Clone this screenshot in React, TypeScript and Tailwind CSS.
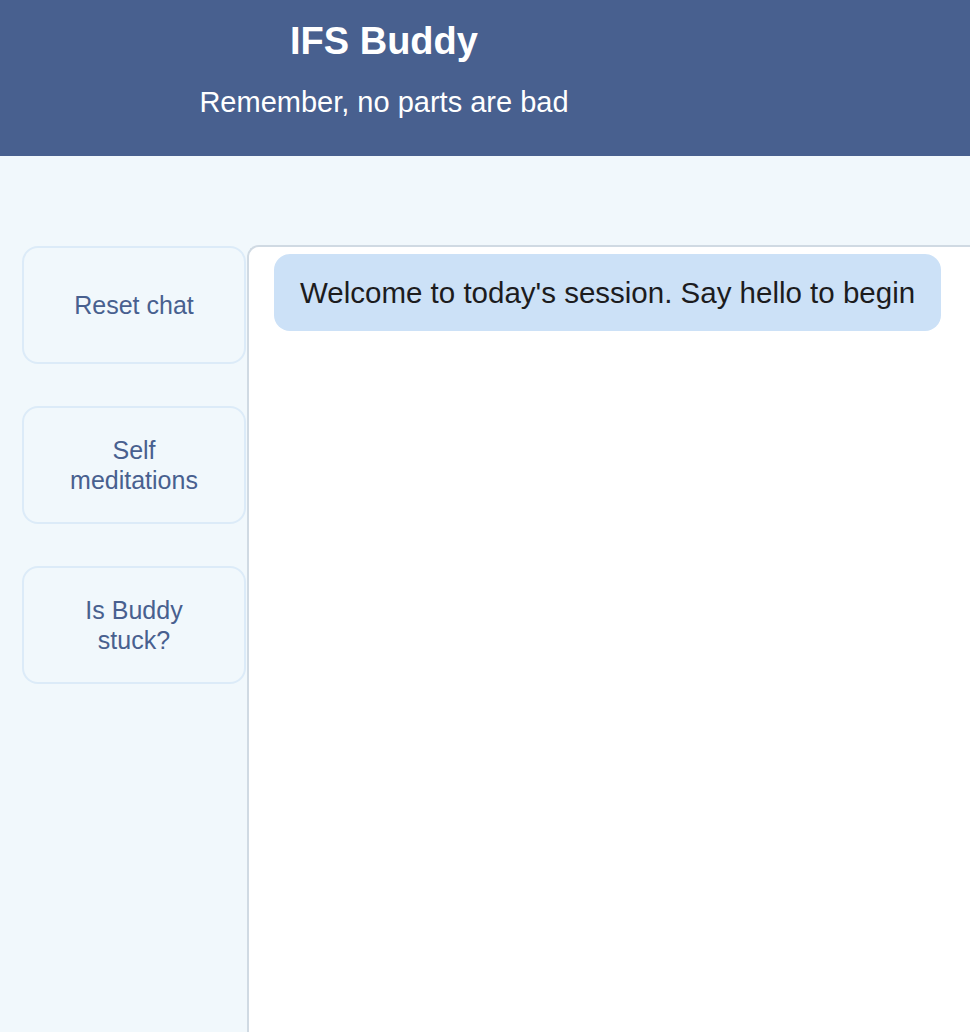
import React from "react";

const buttons = ["Reset chat", "Self meditations", "Is Buddy stuck?"];

export default function App() {
  return (
    <div
      className="flex h-screen flex-col overflow-hidden bg-[#f1f8fc]"
      style={{ fontFamily: '"Liberation Sans", Arial, sans-serif' }}
    >
      {/* Header */}
      <header className="h-[156px] shrink-0 bg-[#48608f]">
        <div className="flex w-[768px] flex-col items-center pt-[17px] text-white">
          <h1 className="text-[38px] font-bold leading-[48px]">IFS Buddy</h1>
          <p className="mt-[21px] text-[29px] leading-[32px]">Remember, no parts are bad</p>
        </div>
      </header>

      {/* Body */}
      <div className="flex min-h-0 flex-1 pt-[89px]">
        <aside className="flex w-[247px] shrink-0 flex-col gap-[42px] pl-[22px] pt-px">
          {buttons.map((label) => (
            <button
              key={label}
              type="button"
              className="flex h-[118px] w-[224px] items-center justify-center rounded-2xl border-2 border-[#dcebf8] bg-[#f1f8fc] px-10 text-center text-[25px] leading-[30px] text-[#48608f]"
            >
              {label}
            </button>
          ))}
        </aside>

        <main className="flex-1 rounded-tl-xl border-l-2 border-t-2 border-[#d0dae3] bg-white">
          <div className="ml-[25px] mr-[29px] mt-[7px] whitespace-nowrap rounded-2xl bg-[#cce1f7] px-[26px] py-[22px] text-[29.5px] leading-[33px] text-[#1c1c1e]">
            Welcome to today's session. Say hello to begin
          </div>
        </main>
      </div>
    </div>
  );
}
